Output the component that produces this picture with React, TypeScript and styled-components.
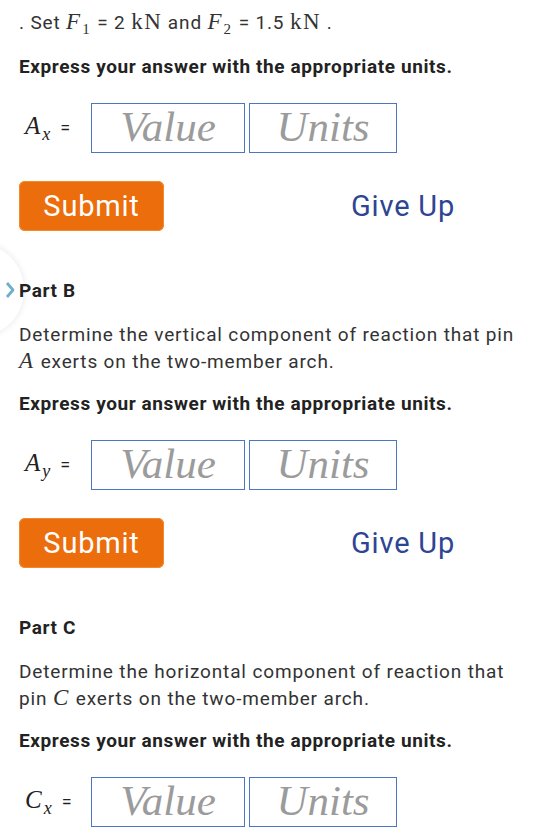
import React from "react";
import styled, { createGlobalStyle } from "styled-components";

const GlobalStyle = createGlobalStyle`
  html, body {
    margin: 0;
    padding: 0;
    background: #fff;
  }
  body {
    font-family: Roboto, "Liberation Sans", sans-serif;
    color: #333;
    overflow: hidden;
  }
`;

const Page = styled.div`
  position: relative;
  width: 540px;
  height: 829px;
  overflow: hidden;
  padding: 9px 14px 0 19px;
  box-sizing: border-box;
`;

const Text = styled.p`
  margin: 0;
  font-size: 19px;
  letter-spacing: 0.85px;
  line-height: 27px;
  color: #333;
`;

const Prompt = styled(Text)`
  margin-top: 17px;
`;

const Instruction = styled(Text)<{ gap?: number }>`
  margin-top: ${(p) => p.gap ?? 17}px;
  font-weight: 700;
  letter-spacing: 0.6px;
  color: #222;
`;

// upright math (units)
const M = styled.span`
  font-family: "Liberation Serif", "DejaVu Serif", serif;
  font-size: 23px;
  letter-spacing: 1.5px;
  line-height: 0;
`;

// math italic symbol
const MI = styled.span<{ size?: number }>`
  font-family: "Liberation Serif", "DejaVu Serif", serif;
  font-style: italic;
  font-size: ${(p) => p.size ?? 23}px;
  letter-spacing: 0;
  line-height: 0;
  padding-right: 2px;
`;

const Sub = styled.sub<{ size?: number; drop?: number }>`
  font-family: "Liberation Serif", "DejaVu Serif", serif;
  font-size: ${(p) => p.size ?? 15}px;
  letter-spacing: 0;
  vertical-align: -${(p) => p.drop ?? 5}px;
  line-height: 0;
  margin-right: 2px;
`;

const AnswerRow = styled.div`
  display: flex;
  align-items: center;
  margin-top: 23px;
  padding-left: 6px;
`;

const Label = styled.div`
  width: 66px;
  white-space: nowrap;
  line-height: 27px;
  color: #222;
`;

const Eq = styled.span`
  font-size: 18px;
  margin-left: 8px;
`;

const Field = styled.div<{ w: number }>`
  width: ${(p) => p.w}px;
  height: 50px;
  box-sizing: border-box;
  border: 1.5px solid #4a76c4;
  padding-bottom: 4px;
  display: flex;
  align-items: center;
  justify-content: center;
  font-family: "Liberation Serif", "DejaVu Serif", serif;
  font-style: italic;
  font-size: 43px;
  color: #9b9b9b;
  & + & {
    margin-left: 4px;
  }
`;

const Actions = styled.div`
  display: flex;
  align-items: center;
  margin-top: 28px;
`;

const SubmitButton = styled.button`
  height: 50px;
  width: 145px;
  border: none;
  border-radius: 6px;
  background: #eb6d0b;
  box-shadow: 0 0 0 1px #f08a2e inset;
  color: #fff;
  font-family: Roboto, "Liberation Sans", sans-serif;
  font-size: 29px;
  letter-spacing: 0.8px;
  padding: 0;
`;

const GiveUp = styled.a`
  margin-left: auto;
  margin-right: 71px;
  font-size: 29px;
  letter-spacing: 0.8px;
  color: #2e4593;
`;

const PartTitle = styled.h3`
  position: relative;
  z-index: 1;
  margin: 46px 0 0 0;
  font-size: 19px;
  letter-spacing: 0.6px;
  line-height: 27px;
  font-weight: 700;
  color: #222;
`;

const PartHead = styled.div`
  position: relative;
`;

// round collapse toggle peeking in from the left edge
const Toggle = styled.div`
  position: absolute;
  z-index: 0;
  left: -89px;
  top: -34px;
  width: 94px;
  height: 94px;
  border-radius: 50%;
  background: #fff;
  box-shadow: 0 0 7px rgba(0, 0, 0, 0.1);
  display: flex;
  align-items: center;
  justify-content: flex-end;
  padding-right: 9px;
  box-sizing: border-box;
`;

function Answer({ sym, sub }: { sym: string; sub: string }) {
  return (
    <AnswerRow>
      <Label>
        <MI size={25}>{sym}</MI>
        <Sub size={18} drop={6}>
          <i>{sub}</i>
        </Sub>
        <Eq>=</Eq>
      </Label>
      <Field w={154}>Value</Field>
      <Field w={148}>Units</Field>
    </AnswerRow>
  );
}

function ActionBar() {
  return (
    <Actions>
      <SubmitButton>Submit</SubmitButton>
      <GiveUp>Give Up</GiveUp>
    </Actions>
  );
}

export default function App() {
  return (
    <Page>
      <GlobalStyle />
      <Text>
        . Set <MI>F</MI>
        <Sub>1</Sub> = 2 <M>kN</M> and <MI>F</MI>
        <Sub>2</Sub> = 1.5 <M>kN</M> .
      </Text>
      <Instruction>Express your answer with the appropriate units.</Instruction>
      <Answer sym="A" sub="x" />
      <ActionBar />

      <PartHead>
        <Toggle>
          <svg width="10" height="18" viewBox="0 0 10 18">
            <path d="M2 2 L8 9 L2 16" fill="none" stroke="#6fb0c8" strokeWidth="2.8" strokeLinejoin="round" />
          </svg>
        </Toggle>
        <PartTitle>Part B</PartTitle>
      </PartHead>
      <Prompt>
        Determine the vertical component of reaction that pin <MI>A</MI> exerts on the two-member arch.
      </Prompt>
      <Instruction gap={15}>Express your answer with the appropriate units.</Instruction>
      <Answer sym="A" sub="y" />
      <ActionBar />

      <PartTitle>Part C</PartTitle>
      <Prompt>
        Determine the horizontal component of reaction that pin <MI>C</MI> exerts on the two-member arch.
      </Prompt>
      <Instruction gap={15}>Express your answer with the appropriate units.</Instruction>
      <Answer sym="C" sub="x" />
    </Page>
  );
}
